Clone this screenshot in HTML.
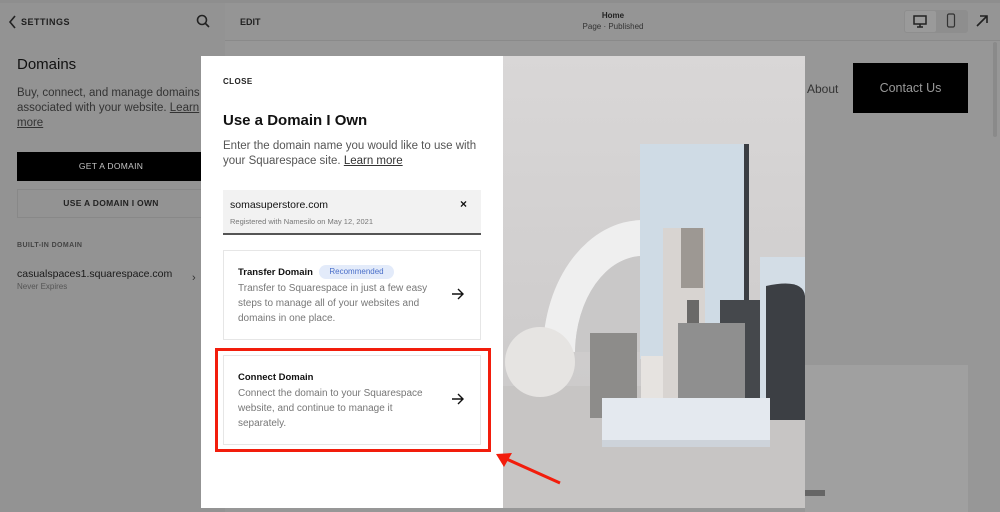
<!DOCTYPE html>
<html><head><meta charset="utf-8"><style>
*{margin:0;padding:0;box-sizing:border-box}
body{width:1000px;height:512px;overflow:hidden;background:#979797;font-family:"Liberation Sans",sans-serif;position:relative}
.abs{position:absolute}
</style></head><body>
<!-- left panel -->
<div class="abs" style="left:0;top:0;width:225px;height:512px;background:#939393"></div>
<div class="abs" style="left:0;top:0;width:1000px;height:3px;background:#8e8e8e"></div>
<div class="abs" style="left:225px;top:3px;width:775px;height:38px;background:#959595;border-bottom:1px solid #8a8a8a"></div>
<svg class="abs" style="left:8px;top:15px" width="10" height="14"><path d="M7 1 L2 7 L7 13" stroke="#222" stroke-width="1.6" fill="none"/></svg>
<div class="abs" style="left:21px;top:17px;font-size:9px;font-weight:bold;color:#1e1e1e;letter-spacing:.5px">SETTINGS</div>
<svg class="abs" style="left:196px;top:14px" width="14" height="14"><circle cx="6" cy="6" r="4.5" stroke="#222" stroke-width="1.6" fill="none"/><path d="M9.5 9.5 L13 13" stroke="#222" stroke-width="1.6"/></svg>
<div class="abs" style="left:17px;top:56px;font-size:15px;color:#111">Domains</div>
<div class="abs" style="left:17px;top:86px;width:205px;font-size:11.5px;line-height:15px;color:#333">Buy, connect, and manage domains associated with your website. <u>Learn</u><br><u>more</u></div>
<div class="abs" style="left:17px;top:152px;width:208px;height:29px;background:#000;color:#c4c4c4;font-size:8.5px;line-height:29px;text-align:center;letter-spacing:.3px;padding-right:20px">GET A DOMAIN</div>
<div class="abs" style="left:17px;top:189px;width:208px;height:29px;border:1px solid #888;color:#222;font-size:8.5px;line-height:27px;text-align:center;letter-spacing:.3px;padding-right:20px;font-weight:bold">USE A DOMAIN I OWN</div>
<div class="abs" style="left:17px;top:242px;font-size:7px;font-weight:bold;color:#444;letter-spacing:.4px">BUILT-IN DOMAIN</div>
<div class="abs" style="left:17px;top:268px;font-size:10.5px;color:#1a1a1a">casualspaces1.squarespace.com</div>
<div class="abs" style="left:17px;top:282px;font-size:8px;color:#555">Never Expires</div>
<div class="abs" style="left:192px;top:272px;font-size:11px;color:#333">›</div>
<!-- top bar right -->
<div class="abs" style="left:240px;top:17px;font-size:9px;font-weight:bold;color:#222">EDIT</div>
<div class="abs" style="left:560px;top:11px;width:106px;text-align:center;font-size:8px;font-weight:bold;color:#222">Home</div>
<div class="abs" style="left:560px;top:22px;width:106px;text-align:center;font-size:8px;color:#333">Page · Published</div>
<div class="abs" style="left:904px;top:10px;width:64px;height:23px;background:#8e8e8e;border-radius:3px"></div>
<div class="abs" style="left:905px;top:11px;width:31px;height:21px;background:#9a9a9a;border-radius:2px"></div>
<svg class="abs" style="left:913px;top:15px" width="14" height="13"><rect x="1" y="1" width="12" height="8" stroke="#222" stroke-width="1.5" fill="none"/><path d="M7 9v3M4 12h6" stroke="#222" stroke-width="1.5"/></svg>
<svg class="abs" style="left:946px;top:13px" width="10" height="16"><rect x="1.5" y="1" width="7" height="13" rx="1.5" stroke="#333" stroke-width="1.2" fill="none"/></svg>
<svg class="abs" style="left:975px;top:14px" width="14" height="14"><path d="M2 12 L12 2 M5 2 H12 V9" stroke="#222" stroke-width="1.6" fill="none"/></svg>
<!-- page content -->
<div class="abs" style="left:807px;top:82px;font-size:12px;color:#333">About</div>
<div class="abs" style="left:853px;top:63px;width:115px;height:50px;background:#000;color:#999;font-size:12.5px;line-height:50px;text-align:center">Contact Us</div>
<div class="abs" style="left:993px;top:42px;width:4px;height:95px;background:#8a8a8a;border-radius:2px"></div>
<div class="abs" style="left:805px;top:365px;width:163px;height:147px;background:#a0a0a0"></div>
<div class="abs" style="left:805px;top:490px;width:20px;height:6px;background:#666"></div>
<!-- modal -->
<div class="abs" style="left:201px;top:56px;width:302px;height:452px;background:#fff"></div>
<div class="abs" style="left:223px;top:77px;font-size:8px;font-weight:bold;color:#222;letter-spacing:.4px">CLOSE</div>
<div class="abs" style="left:223px;top:112px;font-size:15px;font-weight:bold;color:#111">Use a Domain I Own</div>
<div class="abs" style="left:223px;top:139px;width:260px;font-size:11.5px;line-height:15px;color:#555">Enter the domain name you would like to use with your Squarespace site. <u style="color:#333">Learn more</u></div>
<div class="abs" style="left:223px;top:190px;width:258px;height:45px;background:#f2f2f2;border-bottom:2px solid #555"></div>
<div class="abs" style="left:230px;top:199px;font-size:10.5px;color:#111">somasuperstore.com</div>
<div class="abs" style="left:230px;top:217px;font-size:7.5px;color:#777">Registered with Namesilo on May 12, 2021</div>
<div class="abs" style="left:460px;top:197px;font-size:12px;font-weight:bold;color:#111">×</div>
<div class="abs" style="left:223px;top:250px;width:258px;height:90px;border:1px solid #e6e6e6"></div>
<div class="abs" style="left:238px;top:267px;font-size:9.5px;font-weight:bold;color:#111">Transfer Domain</div>
<div class="abs" style="left:319px;top:265px;width:75px;height:14px;border-radius:7px;background:#e3ebfa;color:#4a6fc9;font-size:8px;line-height:14px;text-align:center">Recommended</div>
<div class="abs" style="left:238px;top:281px;width:195px;font-size:10px;line-height:15px;color:#777">Transfer to Squarespace in just a few easy steps to manage all of your websites and domains in one place.</div>
<div class="abs" style="left:223px;top:355px;width:258px;height:90px;border:1px solid #e6e6e6"></div>
<div class="abs" style="left:238px;top:372px;font-size:9.5px;font-weight:bold;color:#111">Connect Domain</div>
<div class="abs" style="left:238px;top:386px;width:192px;font-size:10px;line-height:15px;color:#777">Connect the domain to your Squarespace website, and continue to manage it separately.</div>
<svg class="abs" style="left:451px;top:288px" width="14" height="12"><path d="M1 6H12M7 1L12 6L7 11" stroke="#111" stroke-width="1.4" fill="none"/></svg>
<svg class="abs" style="left:451px;top:393px" width="14" height="12"><path d="M1 6H12M7 1L12 6L7 11" stroke="#111" stroke-width="1.4" fill="none"/></svg>
<div class="abs" style="left:215px;top:348px;width:276px;height:104px;border:3px solid #f21d0c"></div>
<!-- image -->
<svg class="abs" style="left:503px;top:56px" width="302" height="452" viewBox="0 0 302 452">
<defs><linearGradient id="bg" x1="0" y1="0" x2="0" y2="1"><stop offset="0" stop-color="#d9d7d7"/><stop offset=".6" stop-color="#cfcdcd"/><stop offset="1" stop-color="#c8c7c7"/></linearGradient></defs>
<rect width="302" height="452" fill="url(#bg)"/>
<rect x="0" y="330" width="302" height="122" fill="#c7c5c4"/>
<path d="M40 296 A100 132 0 0 1 140 164 L140 200 A68 98 0 0 0 72 296 Z" fill="#efefef"/>
<path d="M72 296 A68 98 0 0 1 140 200 L140 296 Z" fill="#c9c8c8"/>
<rect x="137" y="88" width="105" height="215" fill="#cfdbe5"/>
<rect x="241" y="88" width="5" height="215" fill="#3a3d42"/>
<rect x="217" y="244" width="40" height="100" fill="#45484c"/>
<rect x="257" y="201" width="45" height="160" fill="#d3dde6"/>
<path d="M263 230 Q300 222 302 240 V364 H263 Z" fill="#3c3f44"/>
<rect x="138" y="300" width="25" height="45" fill="#e6e3e0"/>
<rect x="160" y="172" width="42" height="172" fill="#d8d4d1"/>
<rect x="178" y="172" width="22" height="60" fill="#9d9893"/>
<rect x="184" y="244" width="12" height="100" fill="#6a6968"/>
<circle cx="37" cy="306" r="35" fill="#e6e4e2"/>
<rect x="87" y="277" width="47" height="85" fill="#8d8c8a"/>
<rect x="175" y="267" width="67" height="87" fill="#8f8f8f"/>
<rect x="99" y="342" width="168" height="49" fill="#e4e9ef"/>
<rect x="99" y="384" width="168" height="7" fill="#cdd3da"/>
</svg>
<svg class="abs" style="left:490px;top:445px" width="80" height="45"><path d="M70 38 L12 12" stroke="#f21d0c" stroke-width="3"/><path d="M6 9 L22 8 L14 22 Z" fill="#f21d0c"/></svg>
</body></html>
